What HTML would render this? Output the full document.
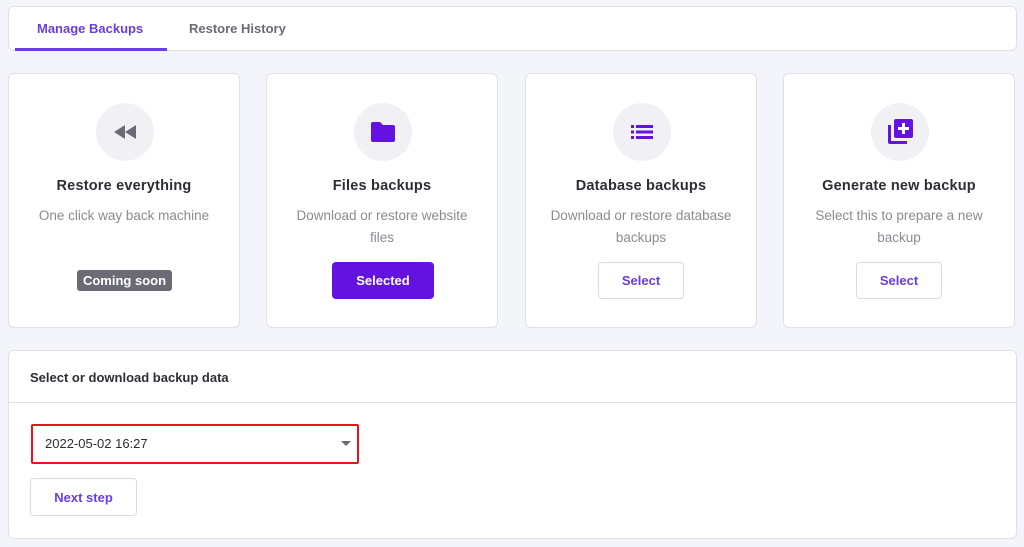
<!DOCTYPE html>
<html><head><meta charset="utf-8"><style>
*{box-sizing:border-box;margin:0;padding:0}
body{width:1024px;height:547px;background:#f4f4fb;font-family:"Liberation Sans",sans-serif;position:relative;overflow:hidden;color:#2f1c6a}
.panel{position:absolute;background:#fff;border:1px solid #e0e0e6;border-radius:6px}
.tab{position:absolute;top:21px;font-size:13px;font-weight:bold}
.card{position:absolute;top:73px;width:232px;height:255px;background:#fff;border:1px solid #e0e0e6;border-radius:6px;text-align:center}
.circ{position:absolute;left:87px;top:29px;width:58px;height:58px;border-radius:50%;background:#f0f0f5;display:flex;align-items:center;justify-content:center}
.t{position:absolute;top:104px;left:0;right:0;font-size:14.5px;font-weight:bold;color:#2d2d36;letter-spacing:0.2px}
.d{position:absolute;top:131px;left:22px;right:22px;font-size:13.5px;line-height:22px;color:#8a8a94}
.btn{position:absolute;top:188px;height:37px;border-radius:4px;font-size:13px;font-weight:bold;display:flex;align-items:center;justify-content:center}
.sel{border:1px solid #dadce0;color:#673de6;background:#fff;width:86px;left:72px}
</style></head><body>
<div class="panel" style="left:8px;top:6px;width:1009px;height:45px"></div>
<div class="tab" style="left:37px;color:#673de6">Manage Backups</div>
<div class="tab" style="left:189px;color:#6b6b75">Restore History</div>
<div style="position:absolute;left:15px;top:48px;width:152px;height:3px;background:#673de6"></div>

<div class="card" style="left:8px"><div class="circ"><svg width="22" height="14" viewBox="0 0 22 14"><path d="M11 0L0 7l11 7zM22 0L11 7l11 7z" fill="#6b6b75"/></svg></div>
<div class="t">Restore everything</div><div class="d" style="left:10px;right:10px">One click way back machine</div>
<div style="position:absolute;left:68px;top:196px;width:95px;height:21px;background:#6b6b75;border-radius:3px;color:#fff;font-size:13px;font-weight:bold;line-height:21px">Coming soon</div></div>

<div class="card" style="left:266px"><div class="circ"><svg width="24" height="20" viewBox="0 0 24 20"><path d="M0 2q0-2 2-2h7l3 3h10q2 0 2 2v13q0 2-2 2H2q-2 0-2-2z" fill="#6412e0"/></svg></div>
<div class="t">Files backups</div><div class="d">Download or restore website files</div>
<div class="btn" style="left:65px;width:102px;background:#6412e0;color:#fff">Selected</div></div>

<div class="card" style="left:525px"><div class="circ"><svg width="22" height="16" viewBox="0 0 22 16"><path d="M0 1h3v3H0zM0 6.5h3v3H0zM0 12h3v3H0zM5 1h17v3H5zM5 6.5h17v3H5zM5 12h17v3H5z" fill="#6412e0"/></svg></div>
<div class="t">Database backups</div><div class="d" style="left:12px;right:12px">Download or restore database backups</div>
<div class="btn sel">Select</div></div>

<div class="card" style="left:783px"><div class="circ"><svg width="26" height="26" viewBox="0 0 26 26"><path d="M1 6v17q0 2 2 2h17v-3H4V6z" fill="#6412e0"/><rect x="7" y="0" width="19" height="19" rx="2" fill="#6412e0"/><path d="M15 4h3v4h4v3h-4v4h-3v-4h-4V8h4z" fill="#fff"/></svg></div>
<div class="t">Generate new backup</div><div class="d">Select this to prepare a new backup</div>
<div class="btn sel">Select</div></div>

<div class="panel" style="left:8px;top:350px;width:1009px;height:189px"></div>
<div style="position:absolute;left:30px;top:370px;font-size:13px;font-weight:bold;color:#2d2d36">Select or download backup data</div>
<div style="position:absolute;left:9px;top:402px;width:1007px;height:1px;background:#e0e0e6"></div>
<div style="position:absolute;left:31px;top:424px;width:328px;height:40px;border:2px solid #e8141c;border-radius:2px"></div>
<div style="position:absolute;left:45px;top:436px;font-size:13px;color:#2d2d36">2022-05-02 16:27</div>
<div style="position:absolute;left:341px;top:441px;border-left:5px solid transparent;border-right:5px solid transparent;border-top:5px solid #6b6b75"></div>
<div style="position:absolute;left:30px;top:478px;width:107px;height:38px;border:1px solid #dadce0;border-radius:4px;background:#fff;color:#673de6;font-size:13px;font-weight:bold;display:flex;align-items:center;justify-content:center">Next step</div>
</body></html>
